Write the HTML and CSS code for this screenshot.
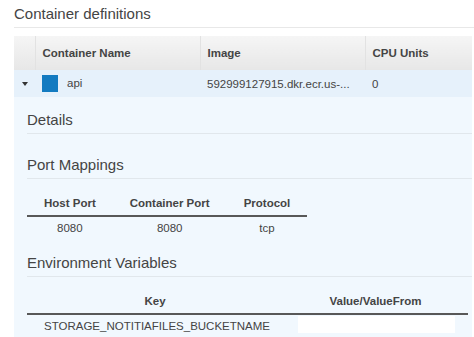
FILE: index.html
```html
<!DOCTYPE html>
<html lang="en">
<head>
    <meta charset="UTF-8">
    <meta name="viewport" content="width=device-width, initial-scale=1.0">
    <title>Container definitions</title>
    <link rel="stylesheet" href="styles.css">
</head>
<body>
    <div class="page">
        <h2 class="section-title">Container definitions</h2>
        <table class="containers">
            <colgroup>
                <col class="col-toggle">
                <col class="col-name">
                <col class="col-image">
                <col class="col-cpu">
            </colgroup>
            <thead>
                <tr>
                    <th></th>
                    <th>Container Name</th>
                    <th>Image</th>
                    <th>CPU Units</th>
                </tr>
            </thead>
            <tbody>
                <tr class="container-row">
                    <td class="toggle"><span class="caret"></span></td>
                    <td><span class="swatch"></span>api</td>
                    <td>592999127915.dkr.ecr.us-...</td>
                    <td>0</td>
                </tr>
                <tr class="detail-row">
                    <td colspan="4" class="detail">
                        <h3 class="detail-title">Details</h3>

                        <h3 class="detail-title spaced">Port Mappings</h3>
                        <table class="sub-table ports">
                            <thead>
                                <tr>
                                    <th>Host Port</th>
                                    <th>Container Port</th>
                                    <th>Protocol</th>
                                </tr>
                            </thead>
                            <tbody>
                                <tr>
                                    <td>8080</td>
                                    <td>8080</td>
                                    <td>tcp</td>
                                </tr>
                            </tbody>
                        </table>

                        <h3 class="detail-title env-title">Environment Variables</h3>
                        <table class="sub-table env">
                            <colgroup>
                                <col class="col-key">
                                <col>
                            </colgroup>
                            <thead>
                                <tr>
                                    <th>Key</th>
                                    <th>Value/ValueFrom</th>
                                </tr>
                            </thead>
                            <tbody>
                                <tr>
                                    <td>STORAGE_NOTITIAFILES_BUCKETNAME</td>
                                    <td class="value-cell"><div class="value-box"></div></td>
                                </tr>
                            </tbody>
                        </table>
                    </td>
                </tr>
            </tbody>
        </table>
    </div>
</body>
</html>
```

FILE: styles.css
```css
body {
    margin: 0;
    font-family: "Liberation Sans", Arial, sans-serif;
    color: #444;
    background: #fff;
    overflow: hidden;
}
.page {
    padding-left: 14px;
}
.section-title {
    margin: 0;
    padding: 5px 0 4px;
    font-size: 15px;
    line-height: 18px;
    font-weight: normal;
    border-bottom: 1px solid #e8e8e8;
}
.containers {
    margin-top: 8px;
    width: 458px;
    border-collapse: collapse;
    table-layout: fixed;
    font-size: 11.5px;
}
.col-toggle { width: 21px; }
.col-name { width: 165px; }
.col-image { width: 165px; }
.col-cpu { width: 107px; }
.containers > thead th {
    height: 34px;
    padding: 0 7px;
    text-align: left;
    font-weight: bold;
    color: #444;
    background: linear-gradient(#f5f5f5, #e7e7e7);
    border-left: 1px solid #e2e2e2;
}
.containers > thead th:first-child {
    border-left: none;
}
.container-row td {
    height: 27px;
    padding: 0 7px;
    background: #e6f1fb;
    white-space: nowrap;
}
.container-row td.toggle {
    padding: 0;
    text-align: center;
}
.caret {
    display: inline-block;
    border-left: 3px solid transparent;
    border-right: 3px solid transparent;
    border-top: 4px solid #333;
    vertical-align: middle;
    margin-left: 1px;
}
.swatch {
    display: inline-block;
    width: 16px;
    height: 17px;
    background: #137bc1;
    vertical-align: middle;
    margin-right: 9px;
}
.detail {
    background: #f1f8fe;
    padding: 14px 0 4px 13px;
}
.detail-title {
    margin: 0;
    padding-bottom: 4px;
    font-size: 15px;
    line-height: 18px;
    font-weight: normal;
    border-bottom: 1px solid #e1e7ec;
}
.detail-title.spaced {
    margin-top: 22px;
}
.detail-title.env-title {
    margin-top: 15px;
}
.sub-table {
    margin-top: 17px;
    border-collapse: collapse;
    font-size: 11.5px;
    line-height: 14px;
}
.sub-table th {
    padding: 0 17px 5px;
    font-weight: bold;
    text-align: center;
    border-bottom: 2px solid #585858;
}
.sub-table td {
    padding: 4px 17px;
    text-align: center;
}
.env {
    width: 441px;
    table-layout: fixed;
}
.col-key { width: 256px; }
.env td.value-cell {
    padding: 1px 13px 0 15px;
    vertical-align: top;
}
.value-box {
    height: 17px;
    background: #fff;
}
```
